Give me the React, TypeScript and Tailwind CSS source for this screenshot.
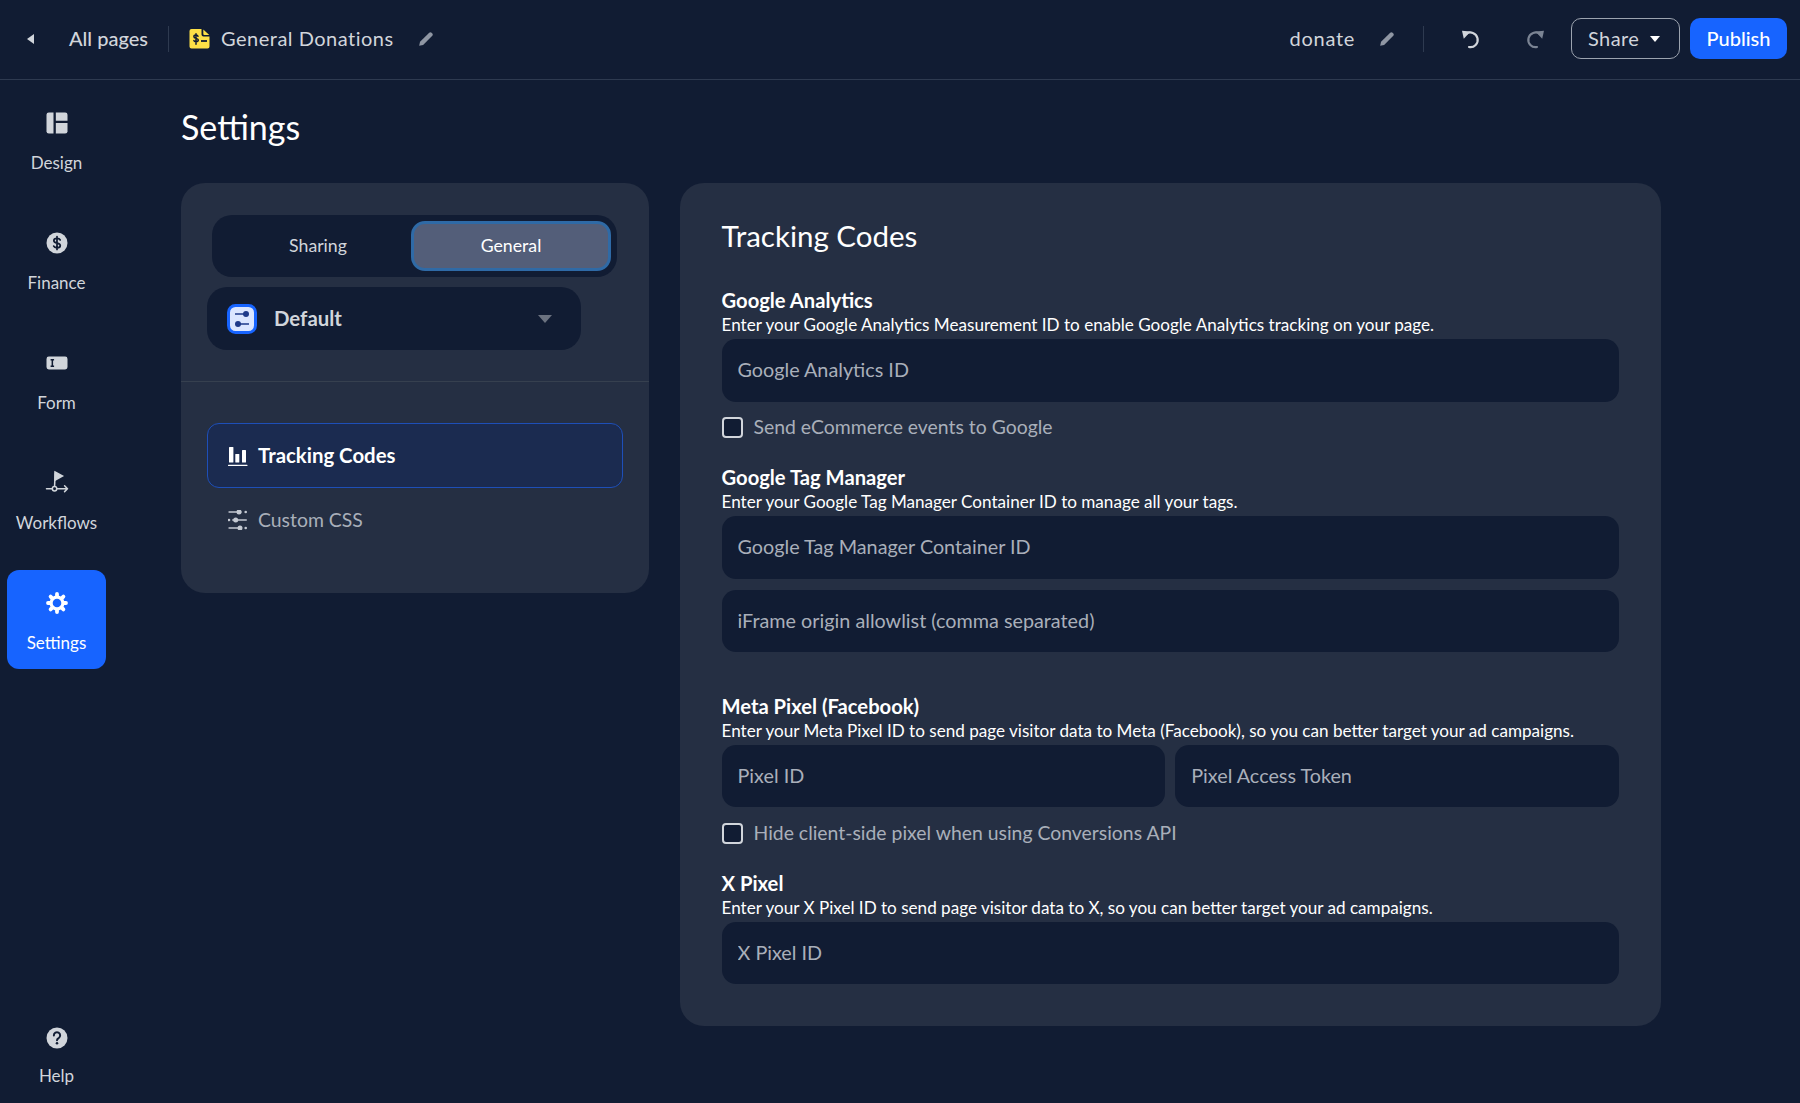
const nav = [
  { label: "Design", icon: <DesignIcon /> },
  { label: "Finance", icon: <FinanceIcon /> },
  { label: "Form", icon: <FormIcon /> },
  { label: "Workflows", icon: <WorkflowIcon /> },
  { label: "Settings", icon: <GearIcon />, active: true },
]

function DesignIcon() {
  return (
    <svg width="28" height="28" viewBox="0 0 24 24" fill="#d1d5db">
      <path d="M3 5a2 2 0 0 1 2-2h4v18H5a2 2 0 0 1-2-2V5z" />
      <path d="M11 3h8a2 2 0 0 1 2 2v5H11V3z" />
      <path d="M11 12h10v7a2 2 0 0 1-2 2h-8v-9z" />
    </svg>
  )
}

function FinanceIcon() {
  return (
    <svg width="28" height="28" viewBox="0 0 24 24">
      <circle cx="12" cy="12" r="9" fill="#d1d5db" />
      <path d="M14.700 9.400c-.4-.9-1.400-1.400-2.700-1.400-1.500 0-2.700.8-2.700 2 0 2.700 5.500 1.500 5.500 4.100 0 1.200-1.300 2-2.800 2-1.300 0-2.400-.5-2.800-1.400M12 6.500v11" fill="none" stroke="#111c33" strokeWidth="1.500" strokeLinecap="round" />
    </svg>
  )
}

function FormIcon() {
  return (
    <svg width="28" height="28" viewBox="0 0 24 24">
      <rect x="3" y="6.500" width="18" height="11" rx="2" fill="#d1d5db" />
      <path d="M6.500 9.200h3M8 9.200v5.600M6.500 14.800h3" stroke="#111c33" strokeWidth="1.300" fill="none" />
    </svg>
  )
}

function WorkflowIcon() {
  return (
    <svg width="28" height="28" viewBox="0 0 24 24" fill="none" stroke="#d1d5db" strokeWidth="1.300">
      <path d="M10.500 3l-.6 12" />
      <path d="M10.300 2.600l6.400 3.500-6.400 3.500z" fill="#d1d5db" />
      <circle cx="9.900" cy="16.900" r="1.900" />
      <path d="M3 16.900h5M11.800 16.900H21M18.500 14.400l2.500 2.500-2.500 2.500" strokeLinecap="round" strokeLinejoin="round" />
    </svg>
  )
}

function GearIcon() {
  return (
    <svg width="28" height="28" viewBox="0 0 28 28">
      <g stroke="white" strokeWidth="3.800" strokeLinecap="round">
        <path d="M14 5v18M5 14h18M7.600 7.600l12.800 12.800M20.400 7.600L7.600 20.400" />
      </g>
      <circle cx="14" cy="14" r="7.500" fill="white" />
      <circle cx="14" cy="14" r="4.300" fill="#1764ff" />
    </svg>
  )
}

function HelpIcon() {
  return (
    <svg width="28" height="28" viewBox="0 0 24 24">
      <circle cx="12" cy="12" r="9" fill="#d1d5db" />
      <path d="M9.300 9.800a2.700 2.700 0 1 1 4.100 2.300c-.9.500-1.400 1-1.400 1.900" fill="none" stroke="#111c33" strokeWidth="1.700" strokeLinecap="round" />
      <circle cx="12" cy="16.500" r="1.100" fill="#111c33" />
    </svg>
  )
}

function PencilIcon() {
  return (
    <svg width="16" height="16" viewBox="0 0 14 14" fill="#8f96a3">
      <path d="M1 13l.8-3.500L9.800 1.500a1.500 1.500 0 0 1 2.100 0l.6.600a1.500 1.500 0 0 1 0 2.100L4.500 12.200z" />
    </svg>
  )
}

function DocIcon() {
  return (
    <svg width="21" height="21" viewBox="0 0 21 21">
      <path d="M2.500 1h10v5.500a2 2 0 0 0 2 2h6v10a2 2 0 0 1-2 2h-16a2 2 0 0 1-2-2V3a2 2 0 0 1 2-2z" fill="#fde047" />
      <path d="M14.300 1.500l6 5.500h-5a1 1 0 0 1-1-1z" fill="#fde047" />
      <path d="M9 8.300c-.3-.8-1.100-1.200-2-1.200-1.200 0-2.100.6-2.100 1.600 0 2.200 4.400 1.200 4.400 3.400 0 1-1 1.700-2.300 1.700-1 0-1.900-.4-2.200-1.200M7 5.800v10.500" fill="none" stroke="#111c33" strokeWidth="1.500" strokeLinecap="round" />
      <path d="M12 13h6" stroke="#111c33" strokeWidth="1.800" />
    </svg>
  )
}

function UndoIcon({ color }: { color: string }) {
  return (
    <svg width="20" height="20" viewBox="0 0 20 20" fill="none">
      <path d="M5 5A7.300 7.300 0 1 1 8 18" stroke={color} strokeWidth="2.200" strokeLinecap="round" />
      <path d="M1 1.800l8.500.7L2.800 9.800z" fill={color} />
    </svg>
  )
}

function ChartIcon() {
  return (
    <svg width="20" height="20" viewBox="0 0 20 20" fill="white">
      <rect x="1" y="1" width="4.400" height="15.500" rx=".5" />
      <rect x="7.300" y="8" width="4" height="8.500" rx=".5" />
      <rect x="14" y="4" width="4" height="12.500" rx=".5" />
      <rect x="0" y="18.700" width="19.500" height="1.300" rx=".5" />
    </svg>
  )
}

function SlidersIcon() {
  return (
    <svg width="20" height="20" viewBox="0 0 20 20" fill="#c4c9d2">
      <rect x="0.300" y="1.200" width="13.400" height="1.600" rx=".8" />
      <circle cx="11" cy="2" r="2.500" />
      <circle cx="17.700" cy="2" r="1.300" />
      <circle cx="1" cy="10" r="1.300" />
      <circle cx="7.700" cy="10" r="2.500" />
      <rect x="4" y="9.200" width="15" height="1.600" rx=".8" />
      <rect x="0.300" y="17.200" width="12" height="1.600" rx=".8" />
      <circle cx="12" cy="18" r="2.500" />
      <circle cx="17.700" cy="18" r="1.300" />
    </svg>
  )
}

function DefaultIcon() {
  return (
    <svg width="30" height="30" viewBox="0 0 30 30">
      <rect x="1.500" y="1.500" width="27" height="27" rx="7" fill="#dbe6ff" stroke="#1764ff" strokeWidth="3" />
      <path d="M8 10h10M12 20h10" stroke="#1e3a8a" strokeWidth="1.500" />
      <circle cx="19" cy="10" r="3" fill="#1e3a8a" />
      <circle cx="11" cy="20" r="3" fill="#1e3a8a" />
    </svg>
  )
}

function TextInput({ placeholder, className = "" }: { placeholder: string; className?: string }) {
  return (
    <input
      readOnly
      placeholder={placeholder}
      className={`block h-[62.500px] w-full rounded-[14px] bg-[#111c33] px-4 pb-[2px] text-[19.800px] text-white outline-none placeholder:text-[#a9afba] ${className}`}
    />
  )
}

function Check({ label }: { label: string }) {
  return (
    <label className="flex h-[26px] items-center gap-[11px] text-[19.400px] text-[#a9afba]">
      <span className="h-[21px] w-[21px] rounded-[4px] border-2 border-[#d1d5db] bg-[#111c33]" />
      <span className="pb-px">{label}</span>
    </label>
  )
}

function Heading({ title, desc }: { title: string; desc: string }) {
  return (
    <div className="mb-[2px]">
      <div className="text-[20.200px] leading-[26px] font-bold text-white">{title}</div>
      <div className="text-[17.100px] leading-[24px] text-white">{desc}</div>
    </div>
  )
}

export default function App() {
  return (
    <div className="flex h-[1103px] w-[1800px] flex-col overflow-hidden bg-[#111c33] font-['Lato',sans-serif]">
      <header className="flex h-[80px] shrink-0 items-center border-b border-[#2e3a50] pr-[13px] pb-[2px] pl-[27px] text-[20px] text-[#d1d5db]">
        <span className="h-0 w-0 border-y-[5.500px] border-r-[7px] border-y-transparent border-r-[#d1d5db]" />
        <span className="-mt-[2px] ml-[35px] font-medium">All pages</span>
        <span className="mx-[20px] h-[26px] w-px bg-[#2e3a50]" />
        <DocIcon />
        <span className="-mt-[2px] mr-[24px] ml-[11px] tracking-[0.5px]">General Donations</span>
        <PencilIcon />
        <div className="ml-auto flex items-center">
          <span className="-mt-[2px] tracking-[0.7px]">donate</span>
          <span className="ml-[24px]"><PencilIcon /></span>
          <span className="mr-[37px] ml-[28px] h-[26px] w-px bg-[#2e3a50]" />
          <UndoIcon color="#d1d5db" />
          <span className="mr-[26px] ml-[44px] -scale-x-100"><UndoIcon color="#7b8494" /></span>
          <button className="flex h-[41px] w-[109px] items-center gap-[11px] rounded-[10px] border border-[#9ca3af] pb-[2px] pl-[16px] tracking-[0.4px] text-[#d1d5db]">
            Share
            <span className="mt-[2px] h-0 w-0 border-x-[5px] border-t-[6px] border-x-transparent border-t-white" />
          </button>
          <button className="ml-[10px] h-[41px] w-[97px] rounded-[10px] bg-[#1764ff] pb-[2px] font-medium text-white">Publish</button>
        </div>
      </header>

      <div className="flex min-h-0 flex-1">
        <aside className="flex w-[113px] shrink-0 flex-col justify-between px-[7px] pt-[10px]">
          <div className="flex flex-col gap-[21px]">
            {nav.map((item) => (
              <div
                key={item.label}
                className={`flex h-[99px] flex-col items-center rounded-[12px] pt-[19px] ${item.active ? "bg-[#1764ff] text-white" : "text-[#d1d5db]"}`}
              >
                {item.icon}
                <span className="mt-[14px] text-[17px] leading-[24px]">{item.label}</span>
              </div>
            ))}
          </div>
          <div className="flex h-[97px] flex-col items-center pt-[18px] text-[#d1d5db]">
            <HelpIcon />
            <span className="mt-[12px] text-[17px] leading-[24px]">Help</span>
          </div>
        </aside>

        <main className="pl-[68px]">
          <h1 className="mt-[24px] text-[34px] leading-[46px] text-white">Settings</h1>
          <div className="mt-[33px] flex items-start gap-[31px]">
            <div className="h-[409.500px] w-[468px] rounded-[24px] bg-[#252f43]">
              <div className="border-b border-[#36404f] px-[26px] pt-[32px] pb-[31px]">
                <div className="ml-[5px] flex h-[62px] w-[405px] rounded-[20px] bg-[#111c33] p-[6px] text-[17.700px]">
                  <button className="w-[193px] pl-[7px] text-[#d1d5db]">Sharing</button>
                  <button className="w-[200px] rounded-[14px] border-[3px] border-[#2f6aa6] bg-[#535e79] text-white">General</button>
                </div>
                <div className="mt-[10px] flex h-[63px] w-[374px] items-center rounded-[20px] bg-[#111c33] pr-[29px] pl-[20px]">
                  <DefaultIcon />
                  <span className="ml-[17px] text-[20.400px] font-bold text-[#d1d5db]">Default</span>
                  <span className="ml-auto h-0 w-0 border-x-[7px] border-t-[8px] border-x-transparent border-t-[#6b7280]" />
                </div>
              </div>
              <div className="px-[26px] pt-[41px]">
                <div className="flex h-[65px] w-[416px] items-center gap-[10px] rounded-[12px] border border-[#1e4fb8] bg-[#1b2b50] pl-[20px] text-[20.400px] font-bold text-white">
                  <ChartIcon />
                  <span className="pb-[1px]">Tracking Codes</span>
                </div>
                <div className="flex h-[63px] items-center gap-[10px] pl-[21px] text-[19.400px] text-[#a9afba]">
                  <SlidersIcon />
                  <span className="pt-px">Custom CSS</span>
                </div>
              </div>
            </div>

            <div className="h-[843px] w-[981px] rounded-[24px] bg-[#252f43] pt-[34px] pr-[42px] pl-[41.500px]">
              <h2 className="mb-[32px] text-[29.500px] leading-[38px] text-white">Tracking Codes</h2>
              <Heading title="Google Analytics" desc="Enter your Google Analytics Measurement ID to enable Google Analytics tracking on your page." />
              <TextInput placeholder="Google Analytics ID" />
              <div className="mt-[13px] mb-[23.500px]"><Check label="Send eCommerce events to Google" /></div>
              <Heading title="Google Tag Manager" desc="Enter your Google Tag Manager Container ID to manage all your tags." />
              <TextInput placeholder="Google Tag Manager Container ID" />
              <TextInput placeholder="iFrame origin allowlist (comma separated)" className="mt-[11px]" />
              <div className="mt-[40.500px]"><Heading title="Meta Pixel (Facebook)" desc="Enter your Meta Pixel ID to send page visitor data to Meta (Facebook), so you can better target your ad campaigns." /></div>
              <div className="flex gap-[10px]">
                <TextInput placeholder="Pixel ID" />
                <TextInput placeholder="Pixel Access Token" />
              </div>
              <div className="mt-[13px] mb-[23.500px]"><Check label="Hide client-side pixel when using Conversions API" /></div>
              <Heading title="X Pixel" desc="Enter your X Pixel ID to send page visitor data to X, so you can better target your ad campaigns." />
              <TextInput placeholder="X Pixel ID" />
            </div>
          </div>
        </main>
      </div>
    </div>
  )
}
